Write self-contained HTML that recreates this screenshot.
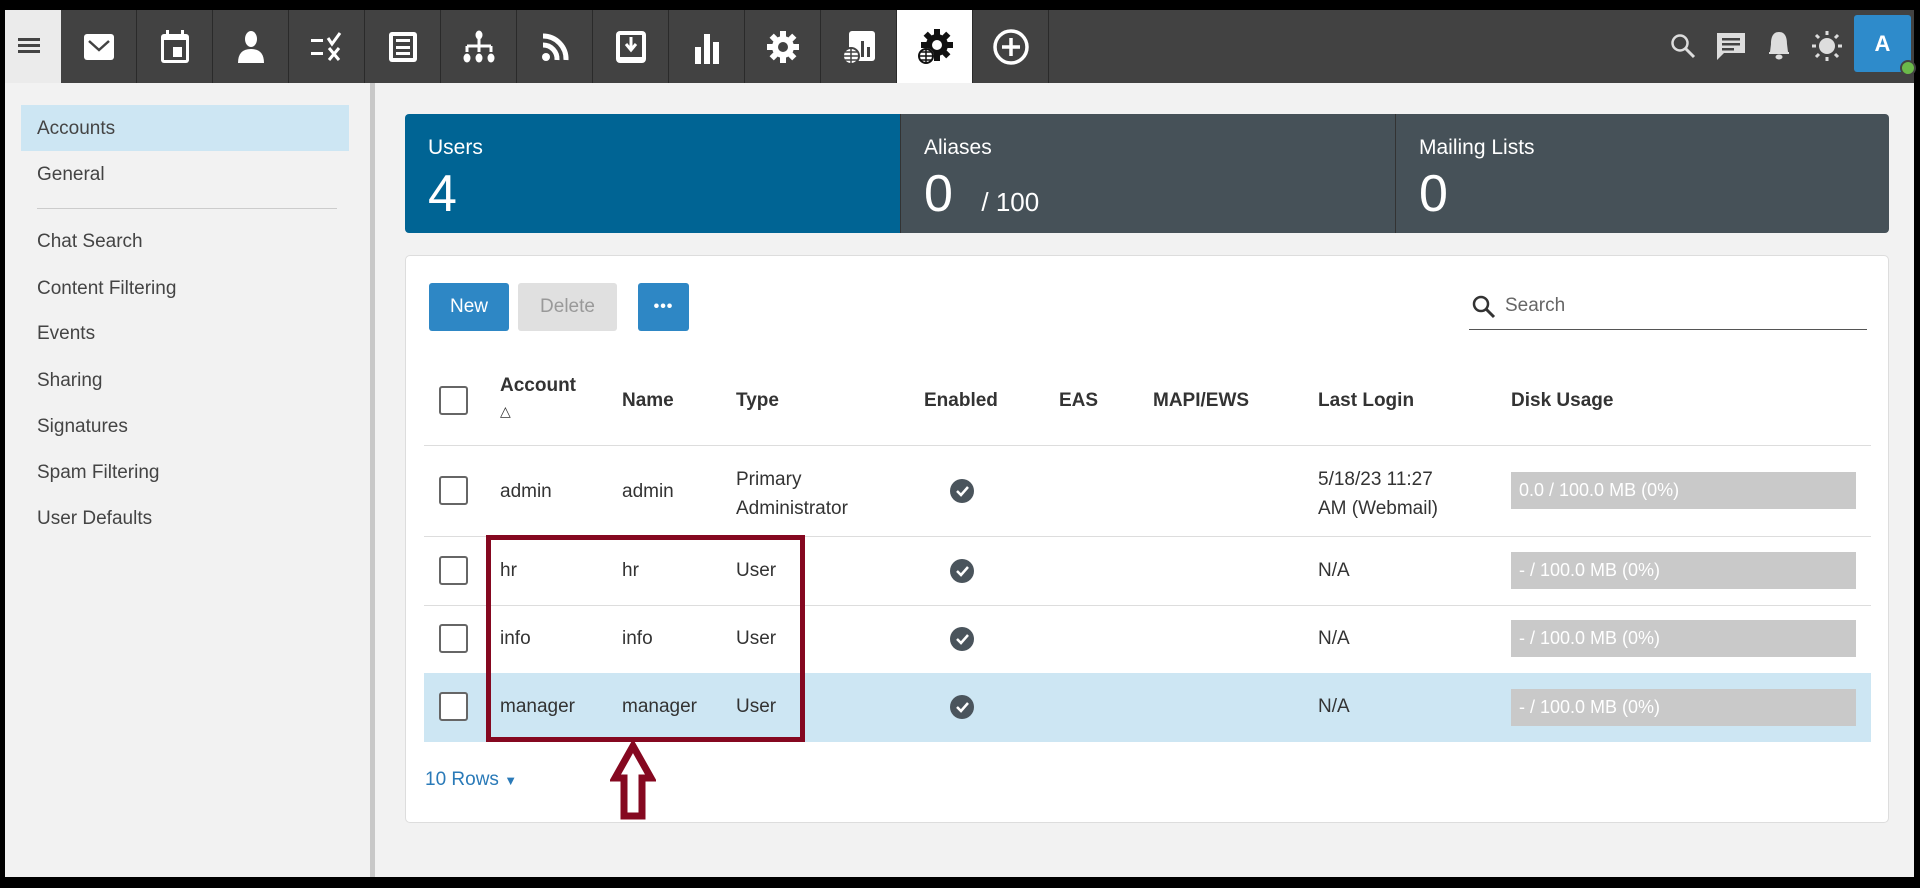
<!DOCTYPE html>
<html><head><meta charset="utf-8"><style>
*{box-sizing:border-box;margin:0;padding:0}
body{width:1920px;height:888px;background:#000;position:relative;overflow:hidden;font-family:"Liberation Sans",sans-serif;color:#333}
.abs{position:absolute}
#top{left:5px;top:10px;width:1909px;height:73px;background:#424242}
.cell{position:absolute;top:0;width:76px;height:73px;border-right:1px solid #2a2a2a;display:flex;align-items:center;justify-content:center}
#side{left:5px;top:83px;width:365px;height:794px;background:#f2f2f2}
#sbar{left:370px;top:83px;width:5px;height:794px;background:#c8c8c8}
#main{left:375px;top:83px;width:1539px;height:794px;background:#f2f2f2}
.si{position:absolute;left:32px;font-size:19px;color:#444}
.card{position:absolute;top:114px;height:119px;color:#fff}
.card .l{position:absolute;left:23px;top:22px;font-size:21px}
.card .n{position:absolute;left:23px;top:50px;font-size:52px}
#panel{left:405px;top:255px;width:1484px;height:568px;background:#fff;border:1px solid #ddd;border-radius:5px}
.btn{position:absolute;top:283px;height:48px;border-radius:3px;font-size:19px;display:flex;align-items:center;justify-content:center}
.th{position:absolute;font-weight:bold;font-size:19px;color:#333}
.td{position:absolute;font-size:19px;color:#333}
.cb{position:absolute;left:439px;width:29px;height:29px;border:2px solid #666;border-radius:3px;background:#fff}
.hl{position:absolute;left:424px;width:1447px;height:1px;background:#ddd}
.ok{position:absolute;left:950px;width:24px;height:24px;border-radius:50%;background:#4a545c}
.disk{position:absolute;left:1511px;width:345px;height:37px;background:#c9c9c9;color:#fff;font-size:18px;padding-left:8px;line-height:37px}
</style></head><body>
<div id="top" class="abs">
 <div class="abs" style="left:0;top:0;width:56px;height:73px;background:#ebebeb"></div>
 <div class="abs" style="left:13px;top:28px;width:22px;height:3px;background:#444;box-shadow:0 6px 0 #444,0 12px 0 #444"></div>
 <div class="cell" style="left:56px"><svg width="34" height="34" viewBox="0 0 34 34"><rect x="2" y="4" width="30" height="26" rx="3" fill="#fff"/><path d="M7 11 L17 20 L27 11" stroke="#424242" stroke-width="2.5" fill="none"/></svg></div>
 <div class="cell" style="left:132px"><svg width="34" height="36" viewBox="0 0 34 36"><rect x="3" y="5" width="28" height="29" rx="3" fill="#fff"/><rect x="8" y="1" width="3" height="7" fill="#fff"/><rect x="23" y="1" width="3" height="7" fill="#fff"/><rect x="6" y="11" width="22" height="20" fill="#424242"/><rect x="15" y="18" width="9" height="10" fill="#fff"/></svg></div>
 <div class="cell" style="left:208px"><svg width="34" height="36" viewBox="0 0 34 36"><ellipse cx="17" cy="10" rx="6" ry="8" fill="#fff"/><path d="M4 34 Q4 20 17 20 Q30 20 30 34Z" fill="#fff"/></svg></div>
 <div class="cell" style="left:284px"><svg width="36" height="34" viewBox="0 0 36 34"><rect x="2" y="9" width="12" height="3" fill="#fff"/><rect x="2" y="22" width="12" height="3" fill="#fff"/><path d="M19 8 L23 14 L31 3" stroke="#fff" stroke-width="3" fill="none"/><path d="M20 18 L30 30 M30 18 L20 30" stroke="#fff" stroke-width="3"/></svg></div>
 <div class="cell" style="left:360px"><svg width="34" height="34" viewBox="0 0 34 34"><rect x="3" y="2" width="28" height="30" rx="3" fill="#fff"/><rect x="7" y="6" width="20" height="22" fill="#424242"/><rect x="10" y="9" width="14" height="3" fill="#fff"/><rect x="10" y="16" width="14" height="3" fill="#fff"/><rect x="10" y="22" width="14" height="3" fill="#fff"/></svg></div>
 <div class="cell" style="left:436px"><svg width="36" height="34" viewBox="0 0 36 34"><ellipse cx="18" cy="5" rx="3.5" ry="4.5" fill="#fff"/><path d="M18 9 V16 M6 16 H30 M6 16 V22 M18 16 V22 M30 16 V22" stroke="#fff" stroke-width="3" fill="none"/><ellipse cx="6" cy="28" rx="3.5" ry="4.5" fill="#fff"/><ellipse cx="18" cy="28" rx="3.5" ry="4.5" fill="#fff"/><ellipse cx="30" cy="28" rx="3.5" ry="4.5" fill="#fff"/></svg></div>
 <div class="cell" style="left:512px"><svg width="34" height="34" viewBox="0 0 34 34"><circle cx="8" cy="27" r="4" fill="#fff"/><path d="M5 15 A14 14 0 0 1 19 30 M5 6 A23 23 0 0 1 28 30" stroke="#fff" stroke-width="5" fill="none"/></svg></div>
 <div class="cell" style="left:588px"><svg width="34" height="36" viewBox="0 0 34 36"><rect x="2" y="2" width="30" height="32" rx="4" fill="#fff"/><rect x="6" y="6" width="22" height="22" fill="#424242"/><path d="M17 8 V20 M12 15 L17 21 L22 15" stroke="#fff" stroke-width="3" fill="none"/></svg></div>
 <div class="cell" style="left:664px"><svg width="30" height="34" viewBox="0 0 30 34"><rect x="3" y="17" width="6" height="17" fill="#fff"/><rect x="12" y="4" width="6" height="30" fill="#fff"/><rect x="21" y="12" width="6" height="22" fill="#fff"/></svg></div>
 <div class="cell" style="left:740px"><svg width="34" height="34" viewBox="0 0 34 34"><g fill="#fff"><circle cx="17" cy="17" r="11"/><rect x="14" y="1" width="6" height="32"/><rect x="1" y="14" width="32" height="6"/><rect x="14" y="1" width="6" height="32" transform="rotate(45 17 17)"/><rect x="14" y="1" width="6" height="32" transform="rotate(-45 17 17)"/></g><circle cx="17" cy="17" r="5" fill="#424242"/></svg></div>
 <div class="cell" style="left:816px"><svg width="36" height="36" viewBox="0 0 36 36"><rect x="8" y="2" width="26" height="30" rx="3" fill="#fff"/><rect x="20" y="12" width="3" height="16" fill="#424242"/><rect x="26" y="18" width="3" height="10" fill="#424242"/><circle cx="10" cy="27" r="8" fill="#fff" stroke="#424242" stroke-width="2"/><path d="M2 27 H18 M10 19 V35 M4 23 H16 M4 31 H16" stroke="#424242" stroke-width="1.5"/></svg></div>
 <div class="cell" style="left:892px;background:#fff"><svg width="40" height="38" viewBox="0 0 40 38"><g fill="#111"><circle cx="22" cy="17" r="11"/><rect x="19" y="1" width="6" height="32"/><rect x="6" y="14" width="32" height="6"/><rect x="19" y="1" width="6" height="32" transform="rotate(45 22 17)"/><rect x="19" y="1" width="6" height="32" transform="rotate(-45 22 17)"/></g><circle cx="22" cy="17" r="5" fill="#fff"/><circle cx="11" cy="28" r="8" fill="#fff"/><circle cx="11" cy="28" r="7" fill="none" stroke="#111" stroke-width="2"/><path d="M4 28 H18 M11 21 V35 M6 24 H16 M6 32 H16" stroke="#111" stroke-width="1.5"/></svg></div>
 <div class="cell" style="left:968px"><svg width="40" height="40" viewBox="0 0 40 40"><circle cx="20" cy="20" r="16" stroke="#fff" stroke-width="3.5" fill="none"/><path d="M20 11 V29 M11 20 H29" stroke="#fff" stroke-width="3.5"/></svg></div>
 <svg class="abs" style="left:1664px;top:22px" width="28" height="28" viewBox="0 0 28 28"><circle cx="11" cy="11" r="7.5" stroke="#ddd" stroke-width="2.5" fill="none"/><path d="M16.5 16.5 L25 25" stroke="#ddd" stroke-width="3"/></svg>
 <svg class="abs" style="left:1710px;top:21px" width="32" height="30" viewBox="0 0 32 30"><path d="M2 2 H30 V22 H9 L2 29Z" fill="#ddd"/><rect x="7" y="7" width="18" height="2.5" fill="#424242"/><rect x="7" y="12" width="18" height="2.5" fill="#424242"/><rect x="7" y="17" width="12" height="2.5" fill="#424242"/></svg>
 <svg class="abs" style="left:1762px;top:20px" width="24" height="30" viewBox="0 0 24 30"><path d="M12 2 C5 2 4 9 4 14 L3 22 H21 L20 14 C20 9 19 2 12 2Z" fill="#ddd"/><path d="M2 22 H22 V24 H2Z" fill="#ddd"/><ellipse cx="12" cy="27" rx="3.5" ry="2.5" fill="#ddd"/></svg>
 <svg class="abs" style="left:1806px;top:20px" width="32" height="32" viewBox="0 0 32 32"><circle cx="16" cy="16" r="8" fill="#ddd"/><g stroke="#ddd" stroke-width="3"><path d="M16 1 V5 M16 27 V31 M1 16 H5 M27 16 H31 M5 5 L8 8 M24 24 L27 27 M27 5 L24 8 M5 27 L8 24"/></g></svg>
 <div class="abs" style="left:1849px;top:5px;width:57px;height:57px;background:#2e8bcb;border-radius:3px;color:#fff;font-weight:bold;font-size:22px;display:flex;align-items:center;justify-content:center">A</div>
 <div class="abs" style="left:1895px;top:50px;width:16px;height:16px;border-radius:50%;background:#6bb94a;border:2px solid #424242"></div>
</div>
<div id="side" class="abs">
 <div class="abs" style="left:16px;top:22px;width:328px;height:46px;background:#cde6f3"></div>
 <div class="si" style="top:35px">Accounts</div>
 <div class="si" style="top:81px">General</div>
 <div class="abs" style="left:32px;top:125px;width:300px;height:1px;background:#ccc"></div>
 <div class="si" style="top:148px">Chat Search</div>
 <div class="si" style="top:195px">Content Filtering</div>
 <div class="si" style="top:240px">Events</div>
 <div class="si" style="top:287px">Sharing</div>
 <div class="si" style="top:333px">Signatures</div>
 <div class="si" style="top:379px">Spam Filtering</div>
 <div class="si" style="top:425px">User Defaults</div>
</div>
<div id="sbar" class="abs"></div>
<div id="main" class="abs"></div>
<div class="card" style="left:405px;width:495px;background:#006494;border-radius:4px 0 0 4px"><div class="l">Users</div><div class="n">4</div></div>
<div class="card" style="left:900px;width:495px;background:#465158;border-left:1px solid #333"><div class="l">Aliases</div><div class="n">0 <span style="font-size:26px;margin-left:14px">/ 100</span></div></div>
<div class="card" style="left:1395px;width:494px;background:#465158;border-left:1px solid #333;border-radius:0 4px 4px 0"><div class="l">Mailing Lists</div><div class="n">0</div></div>
<div id="panel" class="abs"></div>
<div class="btn" style="left:429px;width:80px;background:#2e87c5;color:#fff">New</div>
<div class="btn" style="left:518px;width:99px;background:#e0e0e0;color:#999">Delete</div>
<div class="btn" style="left:638px;width:51px;background:#2e87c5;color:#fff;font-weight:bold;font-size:16px;letter-spacing:1px">•••</div>
<svg class="abs" style="left:1471px;top:294px" width="26" height="26" viewBox="0 0 26 26"><circle cx="10" cy="10" r="7" stroke="#333" stroke-width="2.5" fill="none"/><path d="M15 15 L23 23" stroke="#333" stroke-width="3"/></svg>
<div class="td" style="left:1505px;top:295px;color:#666">Search</div>
<div class="abs" style="left:1469px;top:329px;width:398px;height:1px;background:#555"></div>
<div class="cb" style="top:386px"></div>
<div class="th" style="left:500px;top:375px">Account</div>
<div class="td" style="left:500px;top:403px;font-size:14px">△</div>
<div class="th" style="left:622px;top:390px">Name</div>
<div class="th" style="left:736px;top:390px">Type</div>
<div class="th" style="left:924px;top:390px">Enabled</div>
<div class="th" style="left:1059px;top:390px">EAS</div>
<div class="th" style="left:1153px;top:390px">MAPI/EWS</div>
<div class="th" style="left:1318px;top:390px">Last Login</div>
<div class="th" style="left:1511px;top:390px">Disk Usage</div>
<div class="hl" style="top:445px"></div>
<div class="cb" style="top:476px"></div>
<div class="td" style="left:500px;top:481px">admin</div>
<div class="td" style="left:622px;top:481px">admin</div>
<div class="td" style="left:736px;top:465px;line-height:29px">Primary<br>Administrator</div>
<div class="ok" style="top:479px"><svg width="24" height="24"><path d="M7 12 L11 16 L18 8" stroke="#fff" stroke-width="2.5" fill="none"/></svg></div>
<div class="td" style="left:1318px;top:465px;line-height:29px">5/18/23 11:27<br>AM (Webmail)</div>
<div class="disk" style="top:472px">0.0 / 100.0 MB (0%)</div>
<div class="hl" style="top:536px"></div>
<div class="cb" style="top:556px"></div>
<div class="td" style="left:500px;top:560px">hr</div><div class="td" style="left:622px;top:560px">hr</div><div class="td" style="left:736px;top:560px">User</div>
<div class="ok" style="top:559px"><svg width="24" height="24"><path d="M7 12 L11 16 L18 8" stroke="#fff" stroke-width="2.5" fill="none"/></svg></div>
<div class="td" style="left:1318px;top:560px">N/A</div><div class="disk" style="top:552px">- / 100.0 MB (0%)</div>
<div class="hl" style="top:605px"></div>
<div class="cb" style="top:624px"></div>
<div class="td" style="left:500px;top:628px">info</div><div class="td" style="left:622px;top:628px">info</div><div class="td" style="left:736px;top:628px">User</div>
<div class="ok" style="top:627px"><svg width="24" height="24"><path d="M7 12 L11 16 L18 8" stroke="#fff" stroke-width="2.5" fill="none"/></svg></div>
<div class="td" style="left:1318px;top:628px">N/A</div><div class="disk" style="top:620px">- / 100.0 MB (0%)</div>
<div class="abs" style="left:424px;top:673px;width:1447px;height:69px;background:#cde6f3"></div>
<div class="cb" style="top:692px"></div>
<div class="td" style="left:500px;top:696px">manager</div><div class="td" style="left:622px;top:696px">manager</div><div class="td" style="left:736px;top:696px">User</div>
<div class="ok" style="top:695px"><svg width="24" height="24"><path d="M7 12 L11 16 L18 8" stroke="#fff" stroke-width="2.5" fill="none"/></svg></div>
<div class="td" style="left:1318px;top:696px">N/A</div><div class="disk" style="top:689px">- / 100.0 MB (0%)</div>
<div class="td" style="left:425px;top:769px;color:#2a7ab8">10 Rows <span style="font-size:13px">▼</span></div>
<div class="abs" style="left:486px;top:535px;width:319px;height:207px;border:5px solid #850820"></div>
<svg class="abs" style="left:610px;top:742px" width="46" height="78" viewBox="0 0 46 78"><path d="M23 4 L41 36 H32 V74 H14 V36 H5 Z" fill="#fff" stroke="#850820" stroke-width="7" stroke-linejoin="miter"/></svg>
</body></html>
